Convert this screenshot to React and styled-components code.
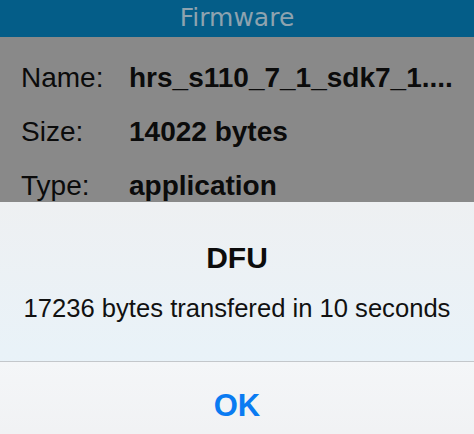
import React from 'react';
import styled, { createGlobalStyle } from 'styled-components';

const GlobalStyle = createGlobalStyle`
  html, body {
    margin: 0;
    padding: 0;
    background: #898989;
  }
  body {
    font-family: "Liberation Sans", Arial, sans-serif;
  }
`;

const Screen = styled.div`
  width: 474px;
  height: 434px;
  overflow: hidden;
  display: flex;
  flex-direction: column;
`;

const NavBar = styled.div`
  height: 37px;
  flex: none;
  background: #045d88;
  display: flex;
  align-items: center;
  justify-content: center;
`;

const NavTitle = styled.div`
  font-family: "DejaVu Sans", sans-serif;
  font-size: 25px;
  color: #8ea3af;
  line-height: 37px;
  margin-top: -2px;
`;

const Dimmed = styled.div`
  height: 165px;
  flex: none;
  overflow: hidden;
  background: #898989;
  padding: 14px 0 0 21px;
  box-sizing: border-box;
`;

const InfoRow = styled.div`
  display: flex;
  height: 54px;
  line-height: 54px;
  font-size: 28px;
  color: #0b0b0b;
  white-space: nowrap;
`;

const Label = styled.span`
  width: 108px;
  flex: none;
`;

const Value = styled.span`
  font-weight: bold;
`;

const Alert = styled.div`
  flex: 1;
  display: flex;
  flex-direction: column;
  background: linear-gradient(180deg, #eef0f2 0%, #e9f2f8 60%, #e7f3fa 100%);
`;

const AlertBody = styled.div`
  height: 160px;
  flex: none;
  box-sizing: border-box;
  padding-top: 38px;
  text-align: center;
  border-bottom: 1px solid #c3c7cb;
`;

const AlertTitle = styled.div`
  font-size: 30px;
  font-weight: bold;
  line-height: 36px;
  color: #0c0c0c;
`;

const AlertMessage = styled.div`
  margin-top: 16px;
  font-size: 25.6px;
  line-height: 32px;
  color: #111;
`;

const AlertButton = styled.div`
  height: 88px;
  flex: none;
  line-height: 88px;
  text-align: center;
  font-size: 31px;
  font-weight: bold;
  color: #0a7bf2;
  background: linear-gradient(180deg, #f4f6f8 0%, #f0f1f3 100%);
`;

const rows = [
  { label: 'Name:', value: 'hrs_s110_7_1_sdk7_1....' },
  { label: 'Size:', value: '14022 bytes' },
  { label: 'Type:', value: 'application' },
];

export default function App() {
  return (
    <Screen>
      <GlobalStyle />
      <NavBar>
        <NavTitle>Firmware</NavTitle>
      </NavBar>
      <Dimmed>
        {rows.map((r) => (
          <InfoRow key={r.label}>
            <Label>{r.label}</Label>
            <Value>{r.value}</Value>
          </InfoRow>
        ))}
      </Dimmed>
      <Alert>
        <AlertBody>
          <AlertTitle>DFU</AlertTitle>
          <AlertMessage>17236 bytes transfered in 10 seconds</AlertMessage>
        </AlertBody>
        <AlertButton>OK</AlertButton>
      </Alert>
    </Screen>
  );
}
